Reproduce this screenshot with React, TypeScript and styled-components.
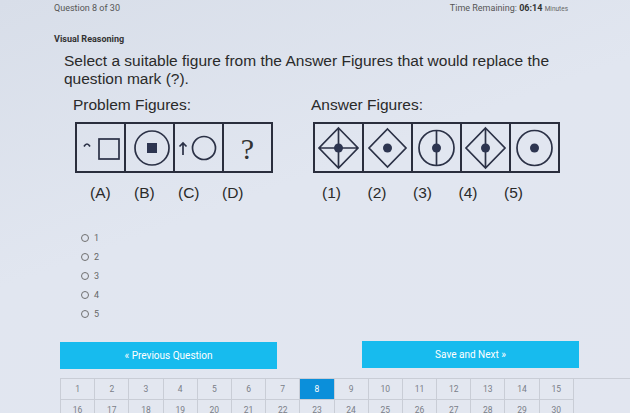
import styled, { createGlobalStyle } from 'styled-components';

const GlobalStyle = createGlobalStyle`
  html, body {
    margin: 0;
    padding: 0;
    background: #dfe4ef;
  }
  body {
    font-family: Roboto, "Liberation Sans", sans-serif;
  }
`;

const Page = styled.div`
  width: 630px;
  height: 413px;
  overflow: hidden;
  box-sizing: border-box;
  background: linear-gradient(160deg, #d8dee9 0%, #e1e6f0 45%, #e2e6f0 100%);
  padding: 3px 0 0 54px;
  color: #333;
`;

const Header = styled.div`
  display: flex;
  justify-content: space-between;
  align-items: baseline;
  width: 514px;
  font-size: 9px;
  color: #555;
  height: 11px;
`;

const Timer = styled.span`
  b {
    color: #333;
    font-weight: 700;
  }
  small {
    font-size: 6.5px;
    color: #666;
  }
`;

const Section = styled.div`
  margin-top: 20px;
  font-size: 9px;
  font-weight: 700;
  color: #333;
`;

const Question = styled.div`
  margin: 8px 0 0 10px;
  width: 500px;
  font-family: "Liberation Sans", Arial, sans-serif;
  font-size: 15.5px;
  line-height: 18px;
  color: #2a2a2a;
`;

const Figures = styled.div`
  display: flex;
  margin: 8px 0 0 19px;
`;

const FigureCol = styled.div<{ $w: number }>`
  width: ${(p) => p.$w}px;
  display: flex;
  flex-direction: column;
`;

const FigTitle = styled.div`
  font-family: "Liberation Sans", Arial, sans-serif;
  font-size: 15.5px;
  line-height: 18px;
  color: #2a2a2a;
`;

const Strip = styled.div`
  display: flex;
  margin: 8px 0 0 2px;
  border: 2px solid #2a2e3d;
  align-self: flex-start;
`;

const Cell = styled.div`
  width: 47px;
  height: 47px;
  display: flex;
  align-items: center;
  justify-content: center;
  & + & {
    border-left: 2px solid #2a2e3d;
  }
`;

const QuestionMark = styled.span`
  font-family: "Liberation Serif", "Times New Roman", serif;
  font-size: 30px;
  color: #333;
  line-height: 1;
  margin-top: 2px;
`;

const Labels = styled.div<{ $step: number; $pad: number }>`
  display: flex;
  margin-top: 11px;
  padding-left: ${(p) => p.$pad}px;
  span {
    width: ${(p) => p.$step}px;
    font-family: "Liberation Sans", Arial, sans-serif;
    font-size: 15.5px;
    color: #2a2a2a;
  }
`;

const Options = styled.div`
  margin: 30px 0 0 27px;
  display: flex;
  flex-direction: column;
  gap: 8px;
`;

const Option = styled.label`
  display: flex;
  align-items: center;
  gap: 5px;
  height: 11px;
  font-size: 9px;
  color: #666;
`;

const Radio = styled.span`
  width: 6px;
  height: 6px;
  border: 1.2px solid #707070;
  border-radius: 50%;
`;

const Buttons = styled.div`
  display: flex;
  justify-content: space-between;
  width: 519px;
  margin: 23px 0 0 6px;
`;

const Button = styled.button<{ $up?: boolean }>`
  width: 217px;
  height: 27px;
  border: none;
  background: #17bbee;
  color: #fff;
  font-family: Roboto, "Liberation Sans", sans-serif;
  font-size: 10px;
  padding: 0;
  margin-top: ${(p) => (p.$up ? -1 : 0)}px;
`;

const Grid = styled.div`
  display: grid;
  grid-template-columns: repeat(15, 34.2px);
  grid-auto-rows: 21px;
  margin: 9px 0 0 6px;
  border-top: 1px solid #c9cdd6;
  border-left: 1px solid #c9cdd6;
`;

const Num = styled.div<{ $active?: boolean }>`
  display: flex;
  align-items: center;
  justify-content: center;
  border-right: 1px solid #c9cdd6;
  border-bottom: 1px solid #c9cdd6;
  font-size: 8.5px;
  color: ${(p) => (p.$active ? '#fff' : '#7a7e88')};
  background: ${(p) => (p.$active ? '#0b8fda' : '#e3e7f0')};
`;

const ink = '#2b3146';

const Svg = ({ children }: { children: React.ReactNode }) => (
  <svg width="47" height="47" viewBox="0 0 47 47" fill="none" stroke={ink} strokeWidth="1.7">
    {children}
  </svg>
);

const Dot = () => <circle cx="23.5" cy="24" r="4.5" fill="#2d3550" stroke="none" />;

const problems = [
  <Svg key="a">
    <path d="M7 22.5 Q10 17.5 13 22.5" />
    <rect x="22" y="15" width="20" height="20" />
  </Svg>,
  <Svg key="b">
    <circle cx="26" cy="24" r="17" />
    <rect x="21" y="19" width="10" height="10" fill="#2d3550" stroke="none" />
  </Svg>,
  <Svg key="c">
    <path d="M8 31 V19 M4.5 22.5 L8 19 L11.5 22.5" />
    <circle cx="29" cy="24" r="11.5" />
  </Svg>,
];

const answers = [
  <Svg key="1">
    <path d="M23.5 4 L43 24 L23.5 44 L4 24 Z M4 24 H43 M23.5 4 V44" />
    <Dot />
  </Svg>,
  <Svg key="2">
    <path d="M23.5 5 L42 24 L23.5 43 L5 24 Z" />
    <Dot />
  </Svg>,
  <Svg key="3">
    <circle cx="23.5" cy="24" r="17.5" />
    <path d="M23.5 6.5 V41.5" />
    <Dot />
  </Svg>,
  <Svg key="4">
    <path d="M23.5 4 L43 24 L23.5 44 L4 24 Z M23.5 4 V44" />
    <Dot />
  </Svg>,
  <Svg key="5">
    <circle cx="23.5" cy="24" r="17.5" />
    <Dot />
  </Svg>,
];

export default function App() {
  return (
    <>
      <GlobalStyle />
      <Page>
        <Header>
          <span>Question 8 of 30</span>
          <Timer>
            Time Remaining: <b>06:14</b> <small>Minutes</small>
          </Timer>
        </Header>
        <Section>Visual Reasoning</Section>
        <Question>
          Select a suitable figure from the Answer Figures that would replace the question mark (?).
        </Question>
        <Figures>
          <FigureCol $w={238}>
            <FigTitle>Problem Figures:</FigTitle>
            <Strip>
              {problems.map((p, i) => (
                <Cell key={i}>{p}</Cell>
              ))}
              <Cell>
                <QuestionMark>?</QuestionMark>
              </Cell>
            </Strip>
            <Labels $step={44} $pad={17}>
              <span>(A)</span>
              <span>(B)</span>
              <span>(C)</span>
              <span>(D)</span>
            </Labels>
          </FigureCol>
          <FigureCol $w={250}>
            <FigTitle>Answer Figures:</FigTitle>
            <Strip>
              {answers.map((a, i) => (
                <Cell key={i}>{a}</Cell>
              ))}
            </Strip>
            <Labels $step={45.5} $pad={11}>
              <span>(1)</span>
              <span>(2)</span>
              <span>(3)</span>
              <span>(4)</span>
              <span>(5)</span>
            </Labels>
          </FigureCol>
        </Figures>
        <Options>
          {[1, 2, 3, 4, 5].map((n) => (
            <Option key={n}>
              <Radio />
              {n}
            </Option>
          ))}
        </Options>
        <Buttons>
          <Button>« Previous Question</Button>
          <Button $up>Save and Next »</Button>
        </Buttons>
        <Grid>
          {Array.from({ length: 30 }, (_, i) => (
            <Num key={i} $active={i === 7}>
              {i + 1}
            </Num>
          ))}
        </Grid>
      </Page>
    </>
  );
}
